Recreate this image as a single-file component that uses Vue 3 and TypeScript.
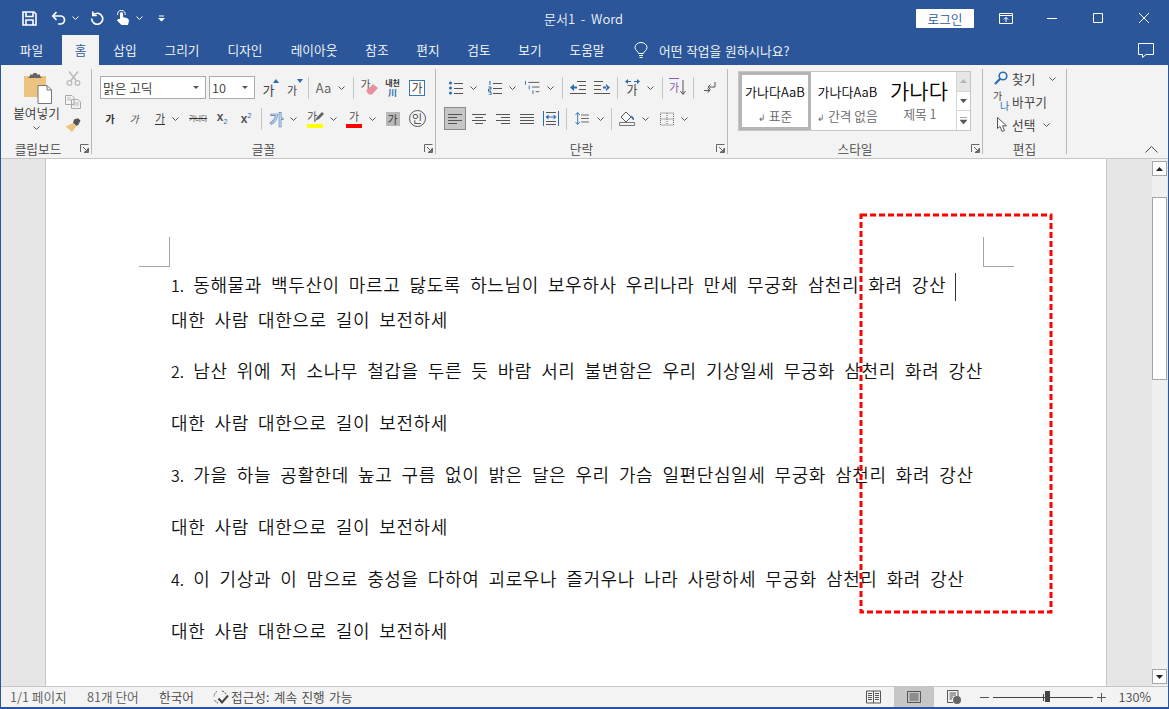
<script setup lang="ts">
const tabs = ['파일', '홈', '삽입', '그리기', '디자인', '레이아웃', '참조', '편지', '검토', '보기', '도움말']

const refrain = '대한 사람 대한으로 길이 보전하세'
const verses = [
  { num: '2.', text: '남산 위에 저 소나무 철갑을 두른 듯 바람 서리 불변함은 우리 기상일세 무궁화 삼천리 화려 강산' },
  { num: '', text: refrain },
  { num: '3.', text: '가을 하늘 공활한데 높고 구름 없이 밝은 달은 우리 가슴 일편단심일세 무궁화 삼천리 화려 강산' },
  { num: '', text: refrain },
  { num: '4.', text: '이 기상과 이 맘으로 충성을 다하여 괴로우나 즐거우나 나라 사랑하세 무궁화 삼천리 화려 강산' },
  { num: '', text: refrain },
]
</script>

<template>
  <div class="app">
    <svg class="defs" width="0" height="0">
      <symbol id="chev" viewBox="0 0 7 4"><path d="M.5.5 3.5 3.5 6.5.5" fill="none" stroke="currentColor" /></symbol>
      <symbol id="launcher" viewBox="0 0 9 9">
        <path d="M.5 8V.5H8.5M4 8.5H8.5V4M3 3 7.5 7.5M7.5 4.5V7.5H4.5" fill="none" stroke="#666" />
      </symbol>
    </svg>

    <header class="titlebar">
      <div class="qat">
        <svg class="q-save" viewBox="0 0 15 15"><path d="M1 1H12L14 3V14H1ZM4 1.5V5.5H11V1.5M4 14V9H11V14" fill="none" stroke="#fff" stroke-width="1.6" /></svg>
        <svg class="q-undo" viewBox="0 0 15 14"><path d="M2 5H9.5A4 4 0 0 1 9.5 13H7M5.5 1 1.8 5 5.5 9" fill="none" stroke="#fff" stroke-width="1.7" /></svg>
        <svg class="q-chev"><use href="#chev" /></svg>
        <svg class="q-redo" viewBox="0 0 14 14"><path d="M3.600 3.600A5.500 5.500 0 1 1 1.700 7.500M2.800.6V4.500H6.800" fill="none" stroke="#fff" stroke-width="1.700" /></svg>
        <svg class="q-touch" viewBox="0 0 14 16"><path d="M4 9V3.5A1.5 1.5 0 0 1 7 3.5V7L12 8.5 13 10.500 12 15H5.500L1 10.500 2.200 9Z" fill="#fff" /><path d="M1.800 5A3.500 3.500 0 0 1 5.500.400 3.500 3.500 0 0 1 9 5" fill="none" stroke="#fff" /></svg>
        <svg class="q-chev2"><use href="#chev" /></svg>
        <svg class="q-more" viewBox="0 0 7 7"><path d="M1 .5H6V1.500H1ZM0 3H7L3.500 6.500Z" fill="#fff" /></svg>
      </div>
      <div class="doc-title">문서1&nbsp; - &nbsp;Word</div>
      <button class="login">로그인</button>
      <div class="winctl">
        <svg class="w-opts" viewBox="0 0 14 11"><path d="M.5.500H13.500V10.500H.5ZM.5 2.500H13.500M7 9V4.500M4.800 6.500 7 4.300 9.200 6.500" fill="none" stroke="#fff" /></svg>
        <svg class="w-min" viewBox="0 0 10 1"><path d="M0 .5H10" stroke="#fff" /></svg>
        <svg class="w-max" viewBox="0 0 10 10"><path d="M.5.500H9.500V9.500H.5Z" fill="none" stroke="#fff" /></svg>
        <svg class="w-close" viewBox="0 0 10 10"><path d="M0 0 10 10M10 0 0 10" stroke="#fff" /></svg>
      </div>
    </header>

    <nav class="tabs">
      <span v-for="(t, i) in tabs" :key="t" class="tab" :class="['tab-' + i, { active: t === '홈' }]">{{ t }}</span>
      <svg class="bulb" viewBox="0 0 14 17"><path d="M4.500 11.500C4.500 9.500 1 8.500 1 5.500A6 5 0 0 1 13 5.500C13 8.500 9.500 9.500 9.500 11.500ZM5 13.500H9M5.500 15.500H8.500" fill="none" stroke="#fff" /></svg>
      <span class="tell">어떤 작업을 원하시나요?</span>
      <svg class="comment" viewBox="0 0 16 15"><path d="M.5.500H15.500V11.500H8L4.500 14.500V11.500H.5Z" fill="none" stroke="#fff" /></svg>
    </nav>

    <section class="ribbon">
      <div class="group g-clip">
        <div class="clip-body">
          <div class="paste">
            <svg class="paste-ico" viewBox="0 0 29 31">
              <path d="M1 3H23V24H1Z" fill="#edc47f" />
              <path d="M7 3V1.500H10A2 2 0 0 1 14 1.500H17V3L19 5H5Z" fill="#666" />
              <path d="M15 12.500H24L28.500 17V30.500H15Z" fill="#fff" stroke="#777" />
              <path d="M24 12.500V17H28.500" fill="none" stroke="#777" />
            </svg>
            <span class="paste-label">붙여넣기</span>
            <svg class="chev paste-chev"><use href="#chev" /></svg>
          </div>
          <div class="clip-tools">
            <svg class="cut" viewBox="0 0 15 15"><path d="M3 .5 10.500 10M12 .5 4.500 10" fill="none" stroke="#bbb" stroke-width="1.500" /><circle cx="3.500" cy="12" r="2.300" fill="none" stroke="#bbb" stroke-width="1.300" /><circle cx="11.500" cy="12" r="2.300" fill="none" stroke="#bbb" stroke-width="1.300" /></svg>
            <svg class="copy" viewBox="0 0 16 14"><path d="M.5.500H7L9 2.500V9.500H.5ZM6.500 4.500H13L15.500 7V13.500H6.500Z" fill="#f3f3f3" stroke="#aaa" /><path d="M8 8H14M8 10H14M2 3H6M2 5H6" stroke="#bbb" /></svg>
            <svg class="brush" viewBox="0 0 16 15"><path d="M9 1.500 13 .2 15.500 2.500 13.500 6.500 11.500 8 8 5Z" fill="#555" /><path d="M8 5 11.500 8 7 14 .5 8.500Z" fill="#edc47f" /></svg>
          </div>
        </div>
        <div class="group-label clip-label">클립보드</div>
        <svg class="launcher"><use href="#launcher" /></svg>
      </div>

      <div class="group g-font">
        <div class="tool-grid font-r1">
          <div class="combo"><span>맑은 고딕</span><i class="caret-down"></i></div>
          <div class="combo size"><span>10</span><i class="caret-down"></i></div>
          <span class="ka"><b class="small">가</b><svg class="tri" viewBox="0 0 6 4"><path d="M3 0 6 4H0Z" fill="#2b6cb0" /></svg></span>
          <span class="ka shrink"><b class="tiny">가</b><svg class="tri" viewBox="0 0 6 4"><path d="M0 0H6L3 4Z" fill="#2b6cb0" /></svg></span>
          <i class="sep"></i>
          <span class="drop"><span class="aa">Aa</span><svg class="chev"><use href="#chev" /></svg></span>
          <i class="sep"></i>
          <span class="eraser"><b class="tiny">가</b><svg viewBox="0 0 12 11"><path d="M0 7 7 0 12 4 6 10.500H3Z" fill="#e8909c" /></svg></span>
          <span class="phon"><b>내천</b><em>川</em></span>
          <span class="boxed">가</span>
        </div>
        <div class="tool-grid font-r2">
          <span class="fmt strong">가</span>
          <span class="fmt ital">가</span>
          <span class="drop"><span class="fmt under">가</span><svg class="chev"><use href="#chev" /></svg></span>
          <span class="fmt strike">가나다</span>
          <span class="fmt script">x<sub>2</sub></span>
          <span class="fmt script">x<sup>2</sup></span>
          <i class="sep"></i>
          <span class="drop"><span class="effect">가</span><svg class="chev"><use href="#chev" /></svg></span>
          <span class="drop"><span class="paint hl">가<svg viewBox="0 0 9 9"><path d="M0 9 2 5 7 0 9 2 4 7Z" fill="#666" /></svg></span><svg class="chev"><use href="#chev" /></svg></span>
          <span class="drop"><span class="paint fc">가</span><svg class="chev"><use href="#chev" /></svg></span>
          <span class="shade">가</span>
          <span class="circled">인</span>
        </div>
        <div class="group-label">글꼴</div>
        <svg class="launcher"><use href="#launcher" /></svg>
      </div>

      <div class="group g-para">
        <div class="tool-grid para-r1">
          <span class="drop"><svg class="i14" viewBox="0 0 14 14"><circle cx="1.500" cy="2" r="1.500" fill="#2b6cb0" /><circle cx="1.500" cy="7" r="1.500" fill="#2b6cb0" /><circle cx="1.500" cy="12" r="1.500" fill="#2b6cb0" /><path d="M5 2.500H14M5 7.500H14M5 12.500H14" stroke="#555" /></svg><svg class="chev"><use href="#chev" /></svg></span>
          <span class="drop"><svg class="i14" viewBox="0 0 14 14"><path d="M1 0H2V4M.5 6H3V8H.5V10H3M.5 11H3V14H.5" fill="none" stroke="#2b6cb0" /><path d="M5 2.500H14M5 7.500H14M5 12.500H14" stroke="#555" /></svg><svg class="chev"><use href="#chev" /></svg></span>
          <span class="drop"><svg class="i16" viewBox="0 0 16 14"><path d="M1 0V4M5 5V9M9 10V14" stroke="#2b6cb0" /><path d="M4 1.500H16M8 6.500H16M12 11.500H16" stroke="#555" /></svg><svg class="chev"><use href="#chev" /></svg></span>
          <i class="sep"></i>
          <svg class="i16" viewBox="0 0 16 13"><path d="M7 .5H16M9 4.500H16M9 8.500H16M0 12.500H16" stroke="#555" /><path d="M0 6.500 4 3V10Z M3 5.500H7V7.500H3Z" fill="#2b6cb0" /></svg>
          <svg class="i16" viewBox="0 0 16 13"><path d="M0 .5H9M0 4.500H7M0 8.500H7M0 12.500H16" stroke="#555" /><path d="M16 6.500 12 3V10Z M9 5.500H13V7.500H9Z" fill="#2b6cb0" /></svg>
          <i class="sep"></i>
          <span class="drop"><span class="dir"><svg viewBox="0 0 15 5"><path d="M3 0V5L0 2.500ZM12 0V5L15 2.500Z M3 2H6V3H3ZM9 2H12V3H9Z" fill="#2b6cb0" /></svg><b>가</b></span><svg class="chev"><use href="#chev" /></svg></span>
          <i class="sep"></i>
          <span class="sortico"><b>가</b><svg viewBox="0 0 6 15"><path d="M3 0V14M.5 11 3 14.500 5.500 11" fill="none" stroke="#555" /></svg></span>
          <i class="sep"></i>
          <svg class="i14 marks" viewBox="0 0 14 14"><path d="M12 1V6H5M7.500 3.500 5 6 7.500 8.500M1 9.500H7M4.500 7.500 7 9.500 4.500 11.500" fill="none" stroke="#555" /></svg>
        </div>
        <div class="tool-grid para-r2">
          <span class="al active"><svg viewBox="0 0 14 10"><path d="M0 .5H14M0 3.500H9M0 6.500H14M0 9.500H9" stroke="#555" /></svg></span>
          <span class="al"><svg viewBox="0 0 14 10"><path d="M0 .5H14M3 3.500H11M0 6.500H14M3 9.500H11" stroke="#555" /></svg></span>
          <span class="al"><svg viewBox="0 0 14 10"><path d="M0 .5H14M5 3.500H14M0 6.500H14M5 9.500H14" stroke="#555" /></svg></span>
          <span class="al"><svg viewBox="0 0 14 10"><path d="M0 .5H14M0 3.500H14M0 6.500H14M0 9.500H14" stroke="#555" /></svg></span>
          <svg class="i16 tall" viewBox="0 0 16 15"><path d="M.5 0V15M15.500 0V15" stroke="#2b6cb0" /><path d="M3 1.500H13M3 10.500H13M3 13.500H13" stroke="#555" /><path d="M2.500 6 5.500 3.500V8.500ZM13.500 6 10.500 3.500V8.500ZM5 5.500H11V6.500H5Z" fill="#2b6cb0" /></svg>
          <i class="sep"></i>
          <span class="drop"><svg class="i16" viewBox="0 0 16 15"><path d="M3 1V14M.5 3.500 3 .5 5.500 3.500M.5 11.500 3 14.500 5.500 11.500" fill="none" stroke="#2b6cb0" /><path d="M7 3.500H16M7 7.500H16M7 11.500H16" stroke="#555" /></svg><svg class="chev"><use href="#chev" /></svg></span>
          <i class="sep"></i>
          <span class="drop"><svg class="i16 fill" viewBox="0 0 16 15"><path d="M2 6 7 1 12 6 7 11Z" fill="#fff" stroke="#555" /><path d="M12 4.500C14 5 15.500 7.500 15 9 13.500 9 12 7 12 4.500Z" fill="#2b6cb0" /><path d="M.5 11.500H15.500V14.500H.5Z" fill="#f3f3f3" stroke="#777" /></svg><svg class="chev"><use href="#chev" /></svg></span>
          <span class="drop"><svg class="i14" viewBox="0 0 14 13"><path d="M.5.500H13.500V12.500H.5ZM7 .5V12.500M.5 6.500H13.500" fill="none" stroke="#666" stroke-dasharray="1 1" /></svg><svg class="chev"><use href="#chev" /></svg></span>
        </div>
        <div class="group-label">단락</div>
        <svg class="launcher"><use href="#launcher" /></svg>
      </div>

      <div class="group g-style">
        <div class="gallery">
          <div class="style-item selected">
            <span class="preview">가나다AaB</span>
            <span class="style-name"><i>↲</i> 표준</span>
          </div>
          <div class="style-item plain">
            <span class="preview">가나다AaB</span>
            <span class="style-name"><i>↲</i> 간격 없음</span>
          </div>
          <div class="style-item big">
            <span class="preview">가나다</span>
            <span class="style-name">제목 1</span>
          </div>
          <div class="gal-scroll">
            <span class="gal-btn up"><svg viewBox="0 0 7 4"><path d="M3.500 0 7 4H0Z" fill="#b5b5b5" /></svg></span>
            <span class="gal-btn"><svg viewBox="0 0 7 4"><path d="M0 0H7L3.500 4Z" fill="#555" /></svg></span>
            <span class="gal-btn"><svg class="more" viewBox="0 0 7 7"><path d="M0 .5H7M0 3H7L3.500 7Z" fill="#555" stroke="#555" stroke-width=".5" /></svg></span>
          </div>
        </div>
        <div class="group-label">스타일</div>
        <svg class="launcher"><use href="#launcher" /></svg>
      </div>

      <div class="group g-edit">
        <div class="edit-list">
          <div class="edit-row">
            <span class="edit-ico"><svg class="find" viewBox="0 0 14 14"><circle cx="9" cy="5" r="3.800" fill="none" stroke="#2b6cb0" stroke-width="1.600" /><path d="M6.200 7.800 1 13" stroke="#2b6cb0" stroke-width="2.200" /></svg></span>
            <span>찾기</span><svg class="chev find-chev"><use href="#chev" /></svg>
          </div>
          <div class="edit-row">
            <span class="edit-ico replace"><b class="r1">가</b><b class="r2">나</b></span>
            <span>바꾸기</span>
          </div>
          <div class="edit-row">
            <span class="edit-ico"><svg class="pick" viewBox="0 0 10 15"><path d="M.5.500V11.500L3 9.300 5 14.500 7.500 13.500 5.500 8.800H9.500Z" fill="#fff" stroke="#555" /></svg></span>
            <span>선택</span><svg class="chev"><use href="#chev" /></svg>
          </div>
        </div>
        <div class="group-label">편집</div>
      </div>
      <svg class="collapse" viewBox="0 0 13 7"><path d="M.5 6.500 6.500.5 12.500 6.500" fill="none" stroke="#444" /></svg>
    </section>

    <main class="doc">
      <div class="gutter"></div>
      <div class="page">
        <i class="crop crop-l"></i>
        <i class="crop crop-r"></i>
        <div class="tight">
          <div class="line"><span class="num">1.</span> 동해물과 백두산이 마르고 닳도록 하느님이 보우하사 우리나라 만세 무궁화 삼천리 화려 강산 <i class="text-caret"></i></div>
          <div class="line">{{ refrain }}</div>
        </div>
        <div v-for="(v, i) in verses" :key="i" class="line wide"><span v-if="v.num" class="num">{{ v.num }}</span>{{ v.num ? ' ' : '' }}{{ v.text }}</div>
      </div>
      <div class="gutter right"></div>
      <div class="scrollbar">
        <span class="sb-btn"><svg viewBox="0 0 7 4"><path d="M3.500 0 7 4H0Z" fill="#222" /></svg></span>
        <span class="sb-thumb"></span>
        <span class="sb-track"></span>
        <span class="sb-btn"><svg viewBox="0 0 7 4"><path d="M0 0H7L3.500 4Z" fill="#222" /></svg></span>
      </div>
      <svg class="redbox" viewBox="0 0 194 401">
        <rect x="2" y="2" width="190" height="397" fill="none" stroke="#f00" stroke-width="3" stroke-dasharray="6 3" />
      </svg>
    </main>

    <footer class="status">
      <span class="st st-page">1/1 페이지</span>
      <span class="st st-words">81개 단어</span>
      <span class="st st-lang">한국어</span>
      <svg class="st-acc" viewBox="0 0 17 15"><path d="M5 1.500A6 6 0 0 0 2 7M2.500 10A6 6 0 0 0 6 13M10 1A6 6 0 0 1 14 4" fill="none" stroke="#555" stroke-dasharray="2 1" /><path d="M6.500 8.500 10 12.500 16 5.500" fill="none" stroke="#444" stroke-width="2" /></svg>
      <span class="st st-access">접근성: 계속 진행 가능</span>
      <div class="st-right">
        <svg class="view v-read" viewBox="0 0 15 14"><path d="M.5 1H7.500V13H.5ZM7.500 1H14.500V13H7.500ZM2 3.500H6M2 5.500H6M2 7.500H6M2 9.500H6M9 3.500H13M9 5.500H13M9 7.500H13M9 9.500H13" fill="none" stroke="#555" /></svg>
        <span class="view-active"><svg class="view" viewBox="0 0 14 12"><path d="M.5.500H13.500V11.500H.5ZM2.500 3H11.500M2.500 5H11.500M2.500 7H11.500M2.500 9H11.500" fill="none" stroke="#555" /></svg></span>
        <svg class="view v-web" viewBox="0 0 14 14"><path d="M.5.500H11V7M6 12.500H.5V.5M2.500 3H9M2.500 5H9M2.500 7H6M2.500 9H5" fill="none" stroke="#555" /><circle cx="10" cy="10" r="4" fill="#666" /></svg>
        <span class="zoom-sign minus"></span>
        <div class="zoom-track"><i class="tick"></i><i class="thumb"></i></div>
        <span class="zoom-sign plus"></span>
        <span class="st zoom-pct">130%</span>
      </div>
    </footer>
  </div>
</template>

<style>
html,
body {
  margin: 0;
  height: 100%;
  overflow: hidden;
}
</style>

<style scoped>
.app {
  width: 1169px;
  height: 709px;
  box-sizing: border-box;
  border: 1px solid #2b579a;
  border-top: 0;
  border-bottom-width: 2px;
  display: flex;
  flex-direction: column;
  position: relative;
  overflow: hidden;
  background: #f3f3f3;
  font-family: "Noto Sans CJK KR", "Noto Sans", sans-serif;
  font-size: 12.7px;
  font-weight: 350;
  color: #444;
}

.defs {
  position: absolute;
}

svg {
  display: block;
  flex: none;
}

.chev {
  width: 7px;
  height: 4px;
  color: #555;
}

/* title bar */
.titlebar {
  height: 35px;
  flex: none;
  background: #2b579a;
  color: #fff;
  display: flex;
  align-items: center;
  padding-top: 1px;
  box-sizing: border-box;
}

.qat {
  width: 543px;
  flex: none;
  display: flex;
  align-items: center;
  padding-left: 21px;
  box-sizing: border-box;
}

.q-save { width: 15px; height: 15px; }
.q-undo { width: 15px; height: 14px; margin-left: 14px; }
.q-chev { width: 7px; height: 4px; margin-left: 6px; color: #fff; }
.q-redo { width: 14px; height: 14px; margin-left: 11px; }
.q-touch { width: 14px; height: 16px; margin-left: 12px; }
.q-chev2 { width: 7px; height: 4px; margin-left: 6px; color: #fff; }
.q-more { width: 7px; height: 7px; margin-left: 15px; }

.doc-title {
  font-size: 13px;
  width: 372px;
  flex: none;
  white-space: nowrap;
  opacity: 0.92;
}

.login {
  width: 58px;
  height: 19px;
  padding: 0;
  border: 0;
  border-radius: 1px;
  background: #fff;
  color: #2b579a;
  font: inherit;
  line-height: 19px;
}

.winctl {
  display: flex;
  align-items: center;
  margin-left: 25px;
}

.w-opts { width: 14px; height: 11px; }
.w-min { width: 10px; height: 1px; margin-left: 34px; }
.w-max { width: 10px; height: 10px; margin-left: 36px; }
.w-close { width: 10px; height: 10px; margin-left: 36px; }

/* tabs */
.tabs {
  height: 30px;
  flex: none;
  background: #2b579a;
  color: #fff;
  display: flex;
  align-items: center;
  position: relative;
}

.tab {
  flex: none;
  text-align: center;
  line-height: 30px;
  height: 30px;
}

.tab-0 { width: 61px; }
.tab.active {
  width: 37px;
  background: #f3f3f3;
  color: #2b579a;
}
.tab-2 { width: 52px; }
.tab-3 { width: 62px; }
.tab-4 { width: 64px; }
.tab-5 { width: 74px; }
.tab-6 { width: 52px; }
.tab-7 { width: 50px; }
.tab-8 { width: 52px; }
.tab-9 { width: 50px; }
.tab-10 { width: 64px; }

.bulb {
  width: 14px;
  height: 17px;
  margin-left: 15px;
}

.tell {
  margin-left: 11px;
  word-spacing: 1px;
  white-space: nowrap;
}

.comment {
  width: 16px;
  height: 15px;
  margin-left: auto;
  margin-right: 14px;
}

/* ribbon */
.ribbon {
  height: 94px;
  flex: none;
  box-sizing: border-box;
  border-bottom: 1px solid #c6c6c6;
  background: #f3f3f3;
  display: flex;
  position: relative;
}

.group {
  flex: none;
  position: relative;
  box-sizing: border-box;
  height: 85px;
  margin-top: 4px;
  border-right: 1px solid #b9b9b9;
  padding-top: 7px;
  display: flex;
  flex-direction: column;
}

.group-label {
  position: absolute;
  left: 0;
  right: 0;
  bottom: -4px;
  text-align: center;
  line-height: 18px;
  color: #444;
}

.launcher {
  position: absolute;
  right: 2px;
  bottom: 1px;
  width: 9px;
  height: 9px;
}

.g-clip { width: 91px; }
.g-font { width: 344px; padding-left: 8px; }
.g-para { width: 292px; padding-left: 8px; }
.g-style { width: 255px; padding: 2px 0 0 10px; }
.g-edit { width: 84px; padding: 0; }

.clip-body {
  display: flex;
  margin-top: -5px;
}

.paste {
  width: 65px;
  margin-left: 3px;
  display: flex;
  flex-direction: column;
  align-items: center;
  flex: none;
}

.paste-ico {
  width: 29px;
  height: 31px;
  margin: 2px 0 0 1px;
}

.paste-label {
  line-height: 18px;
  color: #333;
  white-space: nowrap;
}

.paste-chev {
  margin-top: 4px;
}

.clip-tools {
  width: 17px;
  display: flex;
  flex-direction: column;
  margin-left: -3px;
}

.cut { width: 15px; height: 15px; }
.copy { width: 16px; height: 14px; margin-top: 9px; margin-left: -1px; }
.brush { width: 16px; height: 15px; margin-top: 9px; margin-left: -1px; }

.clip-label {
  right: 20px;
  left: 4px;
}

.tool-grid {
  display: grid;
  justify-items: center;
  align-items: center;
  height: 23px;
}

.font-r1 { grid-template-columns: 106px 49px 30px 19px 8px 37px 8px 24px 23px 26px; }
.font-r2 {
  grid-template-columns: 20px 28px 38px 24px 24px 24px 6px 39px 38px 40px 23px 26px;
  margin-top: 8px;
}
.para-r1 { grid-template-columns: 37px 41px 34px 12px 20px 28px 2px 42px 4px 27px 4px 30px; }
.para-r2 {
  grid-template-columns: 22px 26px 22px 26px 22px 8px 37px 8px 38px 41px;
  margin-top: 8px;
}

.sep {
  width: 1px;
  height: 22px;
  background: #c6c6c6;
  display: block;
}

.drop {
  display: flex;
  align-items: center;
  gap: 7px;
}

.combo {
  width: 106px;
  height: 23px;
  box-sizing: border-box;
  border: 1px solid #ababab;
  background: #fff;
  display: flex;
  align-items: center;
  justify-content: space-between;
  padding: 0 6px 0 2px;
  color: #333;
  justify-self: start;
}

.combo.size {
  width: 46px;
  justify-self: end;
}

.caret-down {
  width: 0;
  height: 0;
  border: 3.5px solid transparent;
  border-top: 3.5px solid #555;
  border-bottom: 0;
}

.ka {
  position: relative;
  display: block;
  width: 15px;
  height: 20px;
}

.ka b {
  font-weight: 400;
  position: absolute;
  bottom: 0;
  left: 0;
  line-height: 16px;
}

.small { font-size: 13px; }
.tiny { font-size: 11px; }

.tri {
  position: absolute;
  width: 6px;
  height: 4px;
  right: -1px;
  top: 1px;
}

.aa {
  font-size: 13px;
  color: #555;
  line-height: 1;
}

.eraser {
  position: relative;
  display: block;
  width: 17px;
  height: 17px;
}

.eraser b {
  position: absolute;
  left: 0;
  top: 0;
  line-height: 11px;
  font-weight: 400;
  color: #555;
}

.eraser svg {
  position: absolute;
  right: 0;
  bottom: 1px;
  width: 12px;
  height: 11px;
}

.phon {
  display: flex;
  flex-direction: column;
  align-items: center;
}

.phon b {
  font-size: 8px;
  line-height: 10px;
  font-weight: 700;
  color: #333;
}

.phon em {
  font-style: normal;
  font-size: 9px;
  line-height: 10px;
  font-weight: 700;
  color: #2b6cb0;
}

.boxed {
  width: 16px;
  height: 16px;
  box-sizing: border-box;
  border: 1px solid #3a75b5;
  background: #fff;
  text-align: center;
  line-height: 13px;
  font-size: 12px;
  color: #333;
}

.fmt {
  font-size: 10px;
  color: #333;
  line-height: 1;
}

.strong { font-weight: 700; }
.ital { font-style: italic; }
.under { text-decoration: underline; font-size: 11px; }
.strike {
  text-decoration: line-through;
  font-size: 7px;
  letter-spacing: -0.5px;
  white-space: nowrap;
}

.script {
  font-weight: 700;
  font-size: 12px;
  font-family: "Liberation Sans", sans-serif;
  color: #555;
}

.script sub,
.script sup {
  font-size: 7px;
  color: #2b6cb0;
  font-weight: 400;
}

.effect {
  font-size: 15px;
  font-weight: 700;
  line-height: 1;
  color: #dbe6f3;
  -webkit-text-stroke: 0.6px #3a75b5;
}

.paint {
  position: relative;
  display: block;
  width: 16px;
  height: 18px;
  box-sizing: border-box;
  font-size: 11px;
  line-height: 13px;
  color: #444;
  border-bottom: 4px solid;
}

.paint svg {
  position: absolute;
  right: -1px;
  top: 2px;
  width: 9px;
  height: 9px;
}

.hl { border-bottom-color: #ffff00; }
.fc { border-bottom-color: #ff0000; text-align: center; }

.shade {
  width: 14px;
  height: 14px;
  background: #b9b9b9;
  text-align: center;
  line-height: 14px;
  font-size: 11px;
  color: #333;
}

.circled {
  width: 15px;
  height: 15px;
  border: 1px solid #555;
  border-radius: 50%;
  text-align: center;
  line-height: 14px;
  font-size: 11px;
  color: #333;
}

.i14 { width: 14px; height: 14px; }
.i16 { width: 16px; height: 13px; }
.i16.tall,
.i16.fill { height: 15px; }

.dir {
  position: relative;
  display: block;
  width: 15px;
  height: 17px;
}

.dir svg {
  position: absolute;
  top: 0;
  left: 0;
  width: 15px;
  height: 5px;
}

.dir b {
  position: absolute;
  left: 2px;
  top: 5px;
  font-size: 12px;
  line-height: 12px;
  font-weight: 400;
  color: #444;
}

.sortico {
  display: flex;
  align-items: center;
  gap: 1px;
}

.sortico b {
  font-weight: 400;
  font-size: 11px;
  color: #8e5bb5;
  text-decoration: overline;
  line-height: 1;
}

.sortico svg {
  width: 6px;
  height: 15px;
}

.al {
  width: 22px;
  height: 23px;
  display: flex;
  align-items: center;
  justify-content: center;
  box-sizing: border-box;
}

.al svg {
  width: 14px;
  height: 10px;
}

.al.active {
  background: #c6c6c6;
  border: 1px solid #8a8a8a;
}

/* styles gallery */
.gallery {
  width: 233px;
  height: 60px;
  box-sizing: border-box;
  border: 1px solid #c6c6c6;
  background: #fff;
  display: flex;
}

.style-item {
  box-sizing: border-box;
  overflow: hidden;
  flex: none;
  display: flex;
  flex-direction: column;
  align-items: center;
  white-space: nowrap;
  color: #000;
}

.preview {
  height: 32px;
  line-height: 34px;
  padding-top: 3px;
  font-size: 13px;
  overflow: hidden;
  width: 60px;
}

.style-name {
  font-size: 12.7px;
  color: #666;
  line-height: 18px;
}

.style-name i {
  font-style: normal;
  font-size: 9px;
}

.selected {
  width: 72px;
  border: 3px solid #b5b5b5;
}

.selected .preview {
  padding-top: 0;
}

.plain {
  width: 73px;
}

.big {
  width: 72px;
}

.big .preview {
  font-size: 21px;
  width: 60px;
  padding-top: 1px;
}

.gal-scroll {
  width: 14px;
  margin-left: auto;
  display: flex;
  flex-direction: column;
  border-left: 1px solid #d6d6d6;
}

.gal-btn {
  flex: 1;
  display: flex;
  align-items: center;
  justify-content: center;
  background: #fff;
  border-bottom: 1px solid #d6d6d6;
}

.gal-btn:last-child {
  border-bottom: 0;
}

.gal-btn.up {
  background: #e6e6e6;
}

.gal-btn svg {
  width: 7px;
  height: 4px;
}

.gal-btn svg.more {
  height: 7px;
}

/* edit group */
.edit-list {
  display: flex;
  flex-direction: column;
  margin-top: -2px;
  padding-left: 10px;
}

.edit-row {
  display: flex;
  align-items: center;
  height: 23px;
  color: #333;
  white-space: nowrap;
}

.edit-ico {
  width: 19px;
  height: 17px;
  display: block;
  position: relative;
  flex: none;
}

.find { width: 14px; height: 14px; margin: 1px 0 0 1px; }
.pick { width: 10px; height: 15px; margin: 1px 0 0 4px; }

.edit-row span + .chev { margin-left: 8px; }
.edit-row span + .find-chev { margin-left: 14px; }

.replace b {
  position: absolute;
  font-size: 10px;
  font-weight: 400;
  line-height: 10px;
}

.r1 { left: 0; top: -2px; color: #444; }
.r2 { left: 7px; top: 8px; color: #2b6cb0; }

.collapse {
  position: absolute;
  left: 1144px;
  bottom: 5px;
  width: 13px;
  height: 7px;
}

/* document */
.doc {
  flex: 1;
  min-height: 0;
  display: flex;
  position: relative;
  background: #e6e6e6;
}

.gutter {
  width: 44px;
  flex: none;
  border-right: 1px solid #c6c6c6;
}

.gutter.right {
  width: 46px;
  border-right: 0;
  border-left: 1px solid #c6c6c6;
  box-sizing: border-box;
}

.page {
  width: 1060px;
  flex: none;
  box-sizing: border-box;
  background: #fff;
  padding: 108px 0 0 125px;
  position: relative;
  color: #111;
  font-size: 18px;
  overflow: hidden;
}

.crop {
  position: absolute;
  top: 78px;
  width: 31px;
  height: 30px;
  box-sizing: border-box;
  border-bottom: 1px solid #a6a6a6;
}

.crop-l {
  left: 93px;
  border-right: 1px solid #a6a6a6;
}

.crop-r {
  left: 937px;
  border-left: 1px solid #a6a6a6;
}

.line {
  white-space: pre;
  letter-spacing: 0.6px;
  word-spacing: 4.55px;
  line-height: 35px;
  height: 35px;
}

.num {
  font-size: 16px;
  letter-spacing: 0;
}

.tight {
  margin-bottom: 7px;
}

.line.wide {
  line-height: 52px;
  height: 52px;
}

.text-caret {
  display: inline-block;
  width: 1px;
  height: 28px;
  background: #333;
  vertical-align: middle;
}

.scrollbar {
  width: 15px;
  flex: none;
  padding: 2px 0;
  box-sizing: border-box;
  background: #f0f0f0;
  display: flex;
  flex-direction: column;
}

.sb-btn {
  height: 15px;
  flex: none;
  box-sizing: border-box;
  border: 1px solid #a6a6a6;
  background: #fff;
  display: flex;
  align-items: center;
  justify-content: center;
}

.sb-btn svg {
  width: 7px;
  height: 4px;
}

.sb-thumb {
  height: 183px;
  margin-top: 21px;
  box-sizing: border-box;
  border: 1px solid #a6a6a6;
  background: #fff;
  flex: none;
}

.sb-track {
  flex: 1;
}

.redbox {
  position: absolute;
  left: 858px;
  top: 54px;
  width: 194px;
  height: 401px;
}

/* status bar */
.status {
  height: 21px;
  flex: none;
  box-sizing: border-box;
  border-top: 1px solid #c6c6c6;
  background: #f3f3f3;
  display: flex;
  align-items: center;
  color: #555;
}

.st {
  white-space: nowrap;
  margin-top: -1px;
}

.st-page { margin-left: 9px; width: 77px; flex: none; }
.st-words { width: 72px; flex: none; }
.st-lang { width: 53px; flex: none; color: #444; }
.st-acc { width: 17px; height: 15px; margin-right: 2px; }
.st-access { color: #444; word-spacing: 1.5px; }

.st-right {
  margin-left: auto;
  display: flex;
  align-items: center;
  height: 100%;
}

.view { width: 14px; height: 12px; }
.v-read { width: 15px; height: 14px; }
.v-web { width: 14px; height: 14px; }

.view-active {
  width: 40px;
  height: 100%;
  margin: 0 13px;
  background: #c6c6c6;
  display: flex;
  align-items: center;
  justify-content: center;
}

.zoom-sign {
  position: relative;
  width: 9px;
  height: 9px;
  margin-left: 19px;
}

.zoom-sign::before {
  content: '';
  position: absolute;
  left: 0;
  right: 0;
  top: 4px;
  height: 1px;
  background: #555;
}

.plus {
  margin-left: 4px;
}

.plus::after {
  content: '';
  position: absolute;
  top: 0;
  bottom: 0;
  left: 4px;
  width: 1px;
  background: #555;
}

.zoom-track {
  width: 100px;
  height: 1px;
  margin-left: 4px;
  background: #444;
  position: relative;
}

.tick {
  position: absolute;
  left: 50px;
  top: -3px;
  width: 1px;
  height: 7px;
  background: #444;
}

.thumb {
  position: absolute;
  left: 52px;
  top: -6px;
  width: 5px;
  height: 11px;
  background: #444;
}

.zoom-pct {
  margin-left: 13px;
  margin-right: 17px;
  color: #444;
}
</style>
